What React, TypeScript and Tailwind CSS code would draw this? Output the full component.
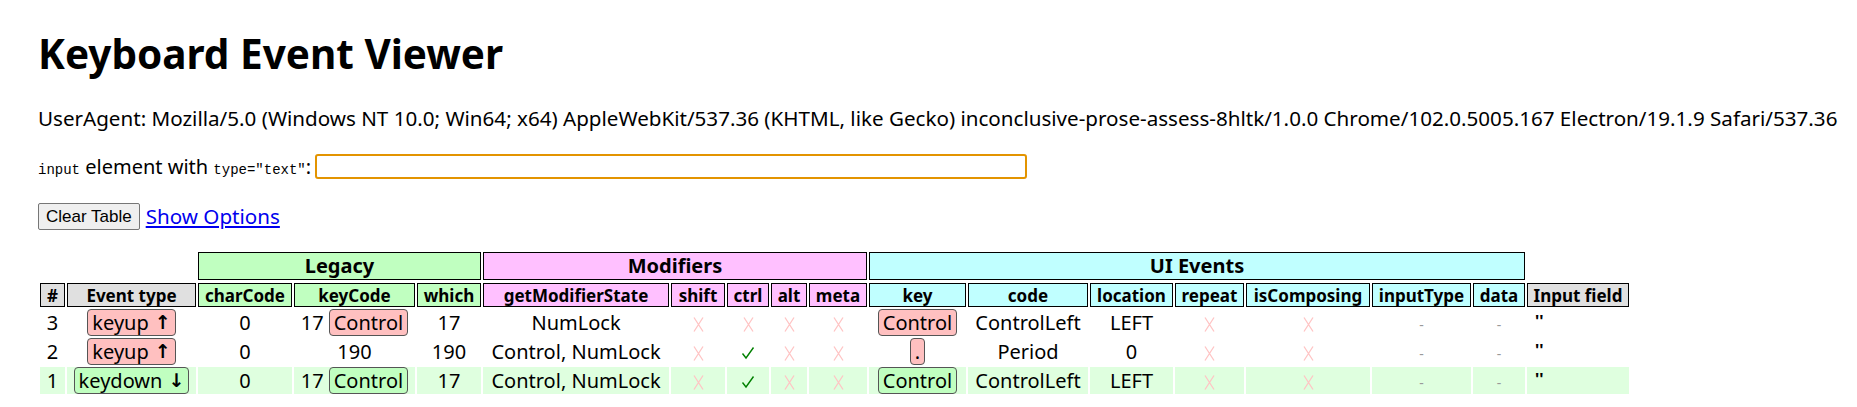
import type { ReactNode } from 'react'

type Row = {
  n: number
  type: 'keyup' | 'keydown'
  charCode: string
  keyCode: string
  keyName?: string
  which: string
  mods: string
  shift: boolean
  ctrl: boolean
  alt: boolean
  meta: boolean
  key: string
  code: string
  location: string
}

const rows: Row[] = [
  { n: 3, type: 'keyup', charCode: '0', keyCode: '17', keyName: 'Control', which: '17', mods: 'NumLock', shift: false, ctrl: false, alt: false, meta: false, key: 'Control', code: 'ControlLeft', location: 'LEFT' },
  { n: 2, type: 'keyup', charCode: '0', keyCode: '190', which: '190', mods: 'Control, NumLock', shift: false, ctrl: true, alt: false, meta: false, key: '.', code: 'Period', location: '0' },
  { n: 1, type: 'keydown', charCode: '0', keyCode: '17', keyName: 'Control', which: '17', mods: 'Control, NumLock', shift: false, ctrl: true, alt: false, meta: false, key: 'Control', code: 'ControlLeft', location: 'LEFT' },
]

function Badge({ down, children }: { down: boolean; children: ReactNode }) {
  return (
    <span
      className={
        'inline-flex h-[27px] items-center rounded-[4px] border border-[#555] px-[4px] leading-none ' +
        (down ? 'bg-[#c0ffc0]' : 'bg-[#ffc0c0]')
      }
    >
      {children}
    </span>
  )
}

// thin cross / tick marks as drawn by the viewer
function Flag({ on }: { on: boolean }) {
  if (on) {
    return (
      <svg width="14" height="14" viewBox="0 0 14 14" className="mt-[3px]" aria-label="✓">
        <path d="M1.5 7.5 L5 12 L12.5 1.5" fill="none" stroke="#008000" strokeWidth="1.4" />
      </svg>
    )
  }
  return (
    <svg width="11" height="15" viewBox="0 0 11 15" className="mt-[3px]" aria-label="✗">
      <path d="M1 0.5 L10 14.5 M10 0.5 L1 14.5" fill="none" stroke="#ffc4c4" strokeWidth="1.3" />
    </svg>
  )
}

function Head({ bg, children }: { bg: string; children: ReactNode }) {
  return (
    <div className={'flex h-[24px] items-center justify-center border border-black text-[17px] font-bold leading-none ' + bg}>
      {children}
    </div>
  )
}

function Cell({ down, className = '', children }: { down: boolean; className?: string; children?: ReactNode }) {
  return (
    <div className={'flex h-[27px] items-center justify-center whitespace-nowrap ' + (down ? 'bg-[#dfffdf] ' : '') + className}>
      {children}
    </div>
  )
}

export default function App() {
  return (
    <div className="min-h-[407px] bg-white px-[38px] font-['Noto_Sans',sans-serif] text-black">
      <h1 className="pt-[30px] text-[40.5px] font-bold leading-[48px]">Keyboard Event Viewer</h1>

      <p className="mt-[26px] whitespace-nowrap text-[20.6px] leading-[28px]">
        UserAgent: Mozilla/5.0 (Windows NT 10.0; Win64; x64) AppleWebKit/537.36 (KHTML, like Gecko) inconclusive-prose-assess-8hltk/1.0.0 Chrome/102.0.5005.167 Electron/19.1.9 Safari/537.36
      </p>

      <div className="mt-[22px] flex h-[25px] items-center">
        <span className="whitespace-nowrap text-[20px] leading-none">
          <code className="font-['Liberation_Mono',monospace] text-[14px]">input</code> element with{' '}
          <code className="font-['Liberation_Mono',monospace] text-[14px]">type="text"</code>:
        </span>
        <input type="text" className="ml-[4px] h-[25px] w-[712px] rounded-[3px] border-2 border-[#e39400] bg-white outline-none" />
      </div>

      <div className="mt-[24px] flex h-[27px] items-center">
        <button className="h-[27px] rounded-[2px] border border-[#767676] bg-[#efefef] px-[7px] font-['Liberation_Sans',sans-serif] text-[17px] leading-none">
          Clear Table
        </button>
        <a href="#" className="ml-[6px] text-[20.6px] text-[#0000ee] underline">
          Show Options
        </a>
      </div>

      <div className="ml-[2px] mt-[22px] grid grid-cols-[25px_129px_94px_121px_64px_186px_54px_42px_36px_58px_97px_120px_83px_69px_124px_99px_52px_102px] grid-rows-[29px_24px_27px_27px_27px] gap-x-[2px] gap-y-[2px] text-[20px]">
        <div className="col-start-3 col-span-3 flex h-[28px] items-center justify-center border border-black bg-[#c0ffc0] font-bold leading-none">Legacy</div>
        <div className="col-span-5 flex h-[28px] items-center justify-center border border-black bg-[#ffc0ff] font-bold leading-none">Modifiers</div>
        <div className="col-span-7 flex h-[28px] items-center justify-center border border-black bg-[#c0ffff] font-bold leading-none">UI Events</div>
        <div />

        <Head bg="bg-[#e0e0e0]">#</Head>
        <Head bg="bg-[#e0e0e0]">Event type</Head>
        <Head bg="bg-[#c0ffc0]">charCode</Head>
        <Head bg="bg-[#c0ffc0]">keyCode</Head>
        <Head bg="bg-[#c0ffc0]">which</Head>
        <Head bg="bg-[#ffc0ff]">getModifierState</Head>
        <Head bg="bg-[#ffc0ff]">shift</Head>
        <Head bg="bg-[#ffc0ff]">ctrl</Head>
        <Head bg="bg-[#ffc0ff]">alt</Head>
        <Head bg="bg-[#ffc0ff]">meta</Head>
        <Head bg="bg-[#c0ffff]">key</Head>
        <Head bg="bg-[#c0ffff]">code</Head>
        <Head bg="bg-[#c0ffff]">location</Head>
        <Head bg="bg-[#c0ffff]">repeat</Head>
        <Head bg="bg-[#c0ffff]">isComposing</Head>
        <Head bg="bg-[#c0ffff]">inputType</Head>
        <Head bg="bg-[#c0ffff]">data</Head>
        <Head bg="bg-[#e0e0e0]">Input field</Head>

        {rows.map((r) => {
          const d = r.type === 'keydown'
          return [
            <Cell key={r.n + 'n'} down={d}>{r.n}</Cell>,
            <Cell key={r.n + 't'} down={d}>
              <Badge down={d}>
                {r.type}
                <span className="ml-[6px] font-['DejaVu_Sans',sans-serif] text-[19px] font-bold">{d ? '↓' : '↑'}</span>
              </Badge>
            </Cell>,
            <Cell key={r.n + 'c'} down={d}>{r.charCode}</Cell>,
            <Cell key={r.n + 'k'} down={d}>
              {r.keyCode}
              {r.keyName && <span className="ml-[5px]"><Badge down={d}>{r.keyName}</Badge></span>}
            </Cell>,
            <Cell key={r.n + 'w'} down={d}>{r.which}</Cell>,
            <Cell key={r.n + 'm'} down={d}>{r.mods}</Cell>,
            <Cell key={r.n + 's'} down={d}><Flag on={r.shift} /></Cell>,
            <Cell key={r.n + 'ct'} down={d}><Flag on={r.ctrl} /></Cell>,
            <Cell key={r.n + 'a'} down={d}><Flag on={r.alt} /></Cell>,
            <Cell key={r.n + 'me'} down={d}><Flag on={r.meta} /></Cell>,
            <Cell key={r.n + 'ky'} down={d}><Badge down={d}>{r.key}</Badge></Cell>,
            <Cell key={r.n + 'cd'} down={d}>{r.code}</Cell>,
            <Cell key={r.n + 'l'} down={d}>{r.location}</Cell>,
            <Cell key={r.n + 'r'} down={d}><Flag on={false} /></Cell>,
            <Cell key={r.n + 'i'} down={d}><Flag on={false} /></Cell>,
            <Cell key={r.n + 'it'} down={d} className="pt-[4px] text-[14px] text-[#999]">-</Cell>,
            <Cell key={r.n + 'dt'} down={d} className="pt-[4px] text-[14px] text-[#999]">-</Cell>,
            <Cell key={r.n + 'f'} down={d} className="justify-start! pb-[4px] pl-[8px] text-[16px] font-bold">''</Cell>,
          ]
        })}
      </div>
    </div>
  )
}
